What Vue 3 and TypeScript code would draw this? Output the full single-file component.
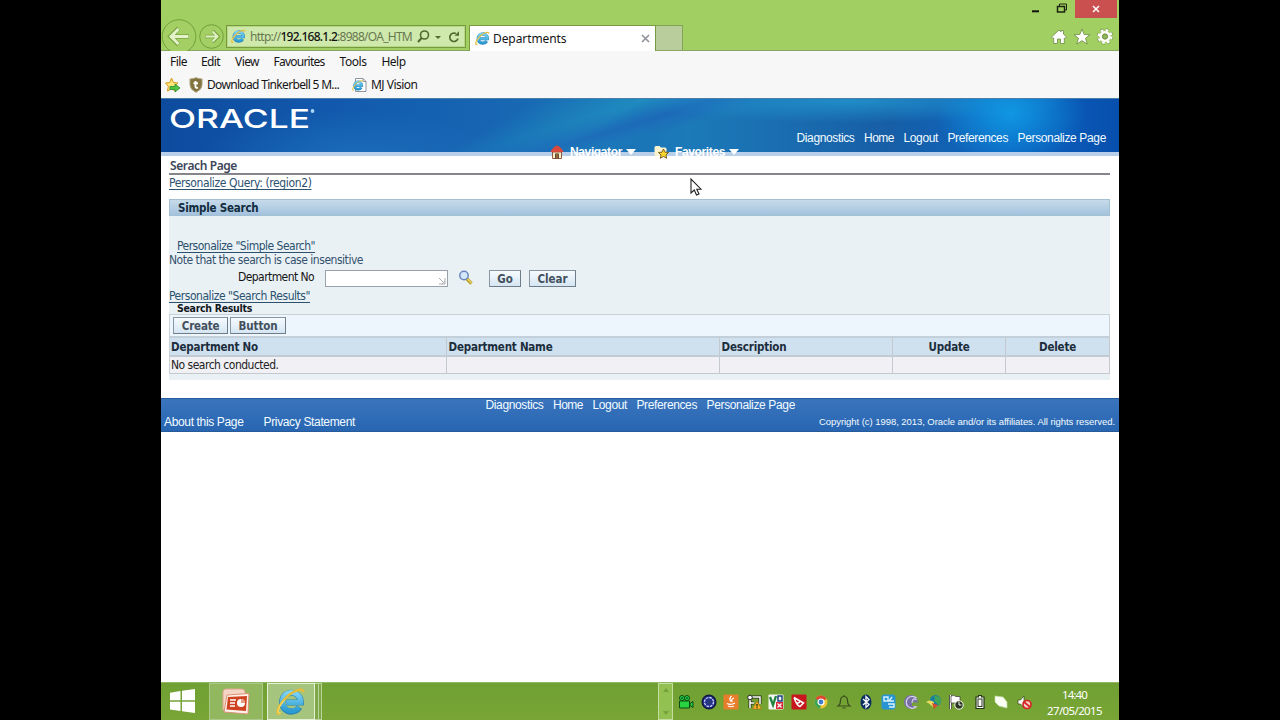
<script setup lang="ts">
interface Label {
  text: string
  width: number
}

// Spreads a label's letters so that it fills the given width in pixels.
const vFit = {
  mounted(el: HTMLElement, binding: { value: number }) {
    const natural = el.getBoundingClientRect().width
    const count = (el.textContent ?? '').trim().length
    el.style.letterSpacing = `${(binding.value - natural) / count}px`
  },
}

const menus: Label[] = [
  { text: 'File', width: 17 },
  { text: 'Edit', width: 19 },
  { text: 'View', width: 24 },
  { text: 'Favourites', width: 51 },
  { text: 'Tools', width: 27 },
  { text: 'Help', width: 24 },
]

const links: Label[] = [
  { text: 'Diagnostics', width: 58 },
  { text: 'Home', width: 30 },
  { text: 'Logout', width: 34.5 },
  { text: 'Preferences', width: 60.5 },
  { text: 'Personalize Page', width: 88.5 },
]

const columns: Label[] = [
  { text: 'Department No', width: 87 },
  { text: 'Department Name', width: 104 },
  { text: 'Description', width: 65 },
  { text: 'Update', width: 41 },
  { text: 'Delete', width: 37 },
]
</script>

<template>
  <div class="screen">
    <svg class="defs" width="0" height="0">
      <defs>
        <linearGradient id="ieBlue" x1="0" y1="0" x2="0" y2="1">
          <stop offset="0" stop-color="#7fd4f4" />
          <stop offset="1" stop-color="#2c9bd3" />
        </linearGradient>
        <symbol id="ie" viewBox="0 0 32 32">
          <path d="M25 21.500A10 10 0 1 1 26.500 16.500H11" fill="none" stroke="#2a83b5" stroke-width="6.500" />
          <path d="M24.500 21.500A9.800 9.800 0 1 1 26.300 16.500H11" fill="none" stroke="url(#ieBlue)" stroke-width="5.300" />
          <path d="M5 28C-1 31 1 22 9 13S29 0 29.500 5.500" fill="none" stroke="#e6bd36" stroke-width="2.600" />
          <path d="M5 27.500C0 29 2 22 9.500 13.500" fill="none" stroke="#fbe77a" stroke-width="1" />
        </symbol>
      </defs>
    </svg>

    <div class="window">
      <header class="chrome">
        <div class="caption">
          <svg class="min" width="10" height="14" viewBox="0 0 10 14"><path d="M1 11.300H8" stroke="#111" stroke-width="2" /></svg>
          <svg class="max" width="12" height="12" viewBox="0 0 12 12" fill="none" stroke="#1c2410">
            <path d="M3.500 3V1H10.500V7H9" />
            <rect x="1.500" y="3.500" width="7" height="5.500" stroke-width="1.500" />
          </svg>
          <div class="close">
            <svg width="8" height="8" viewBox="0 0 8 8"><path d="M1 1L7 7M7 1L1 7" stroke="#fff" stroke-width="1.500" /></svg>
          </div>
        </div>
        <div class="navrow">
          <svg class="arrows" width="65" height="35" viewBox="0 0 65 35">
            <circle cx="18" cy="19.500" r="16.800" fill="#a3cf65" stroke="#72a03a" />
            <circle cx="50.500" cy="19.500" r="11.800" fill="#a3cf65" stroke="#72a03a" />
            <g fill="none" stroke-linejoin="miter">
              <path d="M28 19.500H10M17.500 11.500L9.500 19.500L17.500 27.500" stroke="#78a53f" stroke-width="4.600" />
              <path d="M27.500 19.500H10M17.500 12L10 19.500L17.500 27" stroke="#e3f2c8" stroke-width="3" />
              <path d="M44 19.500H57M51.500 14L57 19.500L51.500 25" stroke="#78a53f" stroke-width="3.600" />
              <path d="M44.500 19.500H56.500M51.500 14.500L56.500 19.500L51.500 24.500" stroke="#dff0c3" stroke-width="2" />
            </g>
          </svg>
          <div class="address">
            <svg class="ie16"><use href="#ie" /></svg>
            <span v-fit="162" class="url">http://<b>192.168.1.2</b>:8988/OA_HTM</span>
            <svg class="tools" width="46" height="16" viewBox="0 0 46 16" fill="none" stroke="#4f6b2c">
              <circle cx="8.500" cy="6" r="4" stroke-width="1.600" />
              <path d="M5.600 9L2 13" stroke-width="2" />
              <path d="M19 7H25L22 10Z" fill="#4f6b2c" stroke="none" />
              <path d="M42 9.500A4.200 4.200 0 1 1 40 4.600" stroke-width="1.700" />
              <path d="M38.500 6.800H43V2.300Z" fill="#4f6b2c" stroke="none" />
            </svg>
          </div>
          <div class="tab">
            <svg class="ie16"><use href="#ie" /></svg>
            <span v-fit="64" class="tabname">Departments</span>
            <svg class="x" width="9" height="9" viewBox="0 0 9 9"><path d="M1 1L8 8M8 1L1 8" stroke="#92959c" stroke-width="1.700" /></svg>
          </div>
          <div class="newtab"></div>
          <svg class="commands" width="66" height="18" viewBox="0 0 66 18" fill="#fff" stroke="#6c8a43" stroke-width=".8">
            <path d="M1.500 9L9 2L11 4V2.500H13.500V6.200L16.500 9L15 10.500L14.300 10V15.500H10.500V11H7.500V15.500H3.700V10L3 10.500Z" />
            <path d="M32 1L34.200 6.600H40L35.500 10.300L37.200 16L32 12.700L26.800 16L28.500 10.300L24 6.600H29.800Z" />
            <circle cx="55" cy="8.500" r="6.400" fill="none" stroke="#6c8a43" stroke-width="3.600" stroke-dasharray="2.700 2.330" />
            <circle cx="55" cy="8.500" r="6.200" fill="none" stroke="#fff" stroke-width="2.800" stroke-dasharray="2.500 2.370" />
            <circle cx="55" cy="8.500" r="4.200" fill="none" stroke="#fff" stroke-width="2.600" />
            <circle cx="55" cy="8.500" r="2.600" fill="#8fb35b" />
          </svg>
        </div>
      </header>

      <nav class="menubar">
        <div v-for="m in menus" :key="m.text"><span v-fit="m.width">{{ m.text }}</span></div>
      </nav>
      <div class="favbar">
        <svg width="16" height="16" viewBox="0 0 16 16">
          <path d="M6.500 1L8.500 5.500L13 6L9.700 9.300L10.500 14L6.500 11.800L2.500 14L3.300 9.300L.5 6L4.800 5.500Z" fill="#ffe479" stroke="#d69a1c" />
          <path d="M5 9.500H10V7L15 11L10 15V12.500H5Z" fill="#54c445" stroke="#298c29" stroke-width=".8" />
        </svg>
        <svg class="shield" width="14" height="16" viewBox="0 0 14 16">
          <path d="M1 2Q4 2 7 .7Q10 2 13 2V8Q13 12.500 7 15.300Q1 12.500 1 8Z" fill="#81723f" stroke="#aaa077" />
          <path d="M6.500 4V9.500Q6.500 11.300 9 10.800M4.500 6.300H9" fill="none" stroke="#fff" stroke-width="1.900" />
        </svg>
        <span v-fit="132" class="fav1">Download Tinkerbell 5 M...</span>
        <svg class="page" width="16" height="16" viewBox="0 0 16 16">
          <path d="M3.500 1.500H11L14 4.500V14.500H3.500Z" fill="#fff" stroke="#8c949c" />
          <path d="M11 1.500V4.500H14" fill="none" stroke="#8c949c" />
          <use href="#ie" x="0" y="2.500" width="12" height="12" />
        </svg>
        <span v-fit="46.500">MJ Vision</span>
      </div>

      <div class="banner">
        <svg class="logo" width="150" height="34" viewBox="0 0 150 34">
          <text x="0" y="22" textLength="141" lengthAdjust="spacingAndGlyphs">ORACLE</text>
          <circle cx="143.500" cy="5" r="1.900" fill="#a9d6f4" />
        </svg>
        <div class="links top">
          <span v-for="l in links" :key="l.text" v-fit="l.width">{{ l.text }}</span>
        </div>
        <div class="quick">
          <svg width="14" height="14" viewBox="0 0 14 14">
            <path d="M2.500 7H11.500V13.500H2.500Z" fill="#f8ecc2" stroke="#77351f" stroke-width=".8" />
            <path d="M.5 7Q3 1.500 7 .5Q11 1.500 13.500 7Z" fill="#d9493b" />
            <path d="M5.200 8.500H8.800V13.500H5.200Z" fill="#3c2417" />
            <path d="M7 9V13.500" stroke="#e8a950" />
          </svg>
          <b v-fit="52" class="q1">Navigator</b>
          <i class="caret"></i>
          <svg class="q2" width="15" height="14" viewBox="0 0 15 14">
            <path d="M.5 2.500Q.5 1 2 1H5.500L7 2.500H11Q12.500 2.500 12.500 4V11H2Q.5 11 .5 9.500Z" fill="#fbf3cf" />
            <path d="M9.500 4L11 7.200L14.500 7.500L12 10L12.700 13.300L9.500 11.500L6.300 13.300L7 10L4.500 7.500L8 7.200Z" fill="#f8d52c" stroke="#5b4312" stroke-width=".8" />
          </svg>
          <b v-fit="50" class="q3">Favorites</b>
          <i class="caret"></i>
        </div>
      </div>

      <main class="content">
        <h1><span v-fit="67">Serach Page</span></h1>
        <div class="query"><a v-fit="142.500">Personalize Query: (region2)</a></div>
        <section>
          <h2><span v-fit="80.500">Simple Search</span></h2>
          <div class="simple"><a v-fit="138">Personalize "Simple Search"</a></div>
          <div class="note"><span v-fit="194">Note that the search is case insensitive</span></div>
          <div class="form">
            <label><span v-fit="76">Department No</span></label>
            <div class="input">
              <svg width="8" height="8" viewBox="0 0 8 8" fill="none" stroke="#a8acb0"><path d="M1 1L6 6M7 1V7H1M7 4L4 7" /></svg>
            </div>
            <svg class="lens" width="16" height="16" viewBox="0 0 16 16">
              <path d="M8.500 8.500L13.500 13.500" stroke="#b49a2a" stroke-width="3.200" />
              <path d="M9 8.500L13.500 13" stroke="#f1d95d" stroke-width="1.300" />
              <circle cx="6" cy="5.500" r="4.200" fill="#d4e8fb" stroke="#6c86bd" stroke-width="1.500" />
            </svg>
            <div class="btn go"><span v-fit="15.500">Go</span></div>
            <div class="btn clear"><span v-fit="30">Clear</span></div>
          </div>
          <div class="results-link"><a v-fit="141">Personalize "Search Results"</a></div>
          <h3><span v-fit="75">Search Results</span></h3>
          <div class="toolbar">
            <div class="btn create"><span v-fit="37.500">Create</span></div>
            <div class="btn button"><span v-fit="39">Button</span></div>
          </div>
          <div class="grid head">
            <div v-for="c in columns" :key="c.text"><span v-fit="c.width">{{ c.text }}</span></div>
          </div>
          <div class="grid body">
            <div><span v-fit="107.500">No search conducted.</span></div>
            <div></div><div></div><div></div><div></div>
          </div>
        </section>
      </main>

      <footer>
        <div class="links bottom">
          <span v-for="l in links" :key="l.text" v-fit="l.width">{{ l.text }}</span>
        </div>
        <div class="legal">
          <span v-fit="79.500">About this Page</span>
          <span v-fit="91.500" class="privacy">Privacy Statement</span>
          <small v-fit="296">Copyright (c) 1998, 2013, Oracle and/or its affiliates. All rights reserved.</small>
        </div>
      </footer>

      <div class="taskbar">
        <svg class="start" width="26" height="24" viewBox="0 0 26 24" fill="#fff">
          <path d="M0 3.700L10.500 2V11.300H0ZM12 1.800L25 0V11.300H12ZM0 12.700H10.500V22L0 20.500ZM12 12.700H25V24L12 22.200Z" />
        </svg>
        <div class="task ppt">
          <svg width="30" height="28" viewBox="0 0 30 28">
            <path d="M2 4Q2 1 5 1H21Q24 1 24 4V22H2Z" fill="#f5d5c5" stroke="#e0a58d" />
            <path d="M6 7L28 5.500L27 26L3 24Z" fill="#fff2eb" stroke="#dc9277" />
            <path d="M7 9L26 8L25 23L5.500 21.500Z" fill="#cf4320" />
            <path d="M9 12H15M9 15H14M9 18H14" stroke="#fff" stroke-width="1.700" />
            <circle cx="20" cy="15" r="4" fill="#fff" />
            <path d="M20 15V11A4 4 0 0 1 24 15Z" fill="#e69b7f" />
          </svg>
        </div>
        <div class="task browser"><svg width="30" height="30"><use href="#ie" /></svg></div>
        <div class="stack"></div>
        <div class="stack second"></div>
        <div class="scroller">
          <svg width="14" height="35" viewBox="0 0 14 35" fill="#77a13c"><path d="M4 8L7 4L10 8ZM4 27H10L7 31Z" /></svg>
        </div>
        <div class="tray">
          <svg viewBox="0 0 16 16"><g fill="#27d341" stroke="#084c13"><circle cx="4" cy="4" r="2.500" /><circle cx="9" cy="4" r="2.500" /><path d="M1.500 7H11.500V14H1.500ZM12 9.500L15 7.500V13.500L12 11.500Z" /></g><circle cx="4" cy="4" r="1" fill="#063" /><circle cx="9" cy="4" r="1" fill="#063" /></svg>
          <svg viewBox="0 0 16 16"><circle cx="8" cy="8" r="6.800" fill="#23308d" stroke="#111846" stroke-width="1.500" /><circle cx="8" cy="8" r="4.500" fill="none" stroke="#cbd6fa" stroke-width="1.300" stroke-dasharray="2.500 1" /><circle cx="8" cy="8" r="2.500" fill="#28397c" /></svg>
          <svg viewBox="0 0 16 16"><rect x=".5" y=".5" width="15" height="15" rx="1" fill="#e87d2c" /><path d="M8.500 2Q5.500 5 8 7.500M11 4Q7 5.500 9.500 8M4 9.500Q8 11.500 12 9M5 12Q8 13.500 11 12" fill="none" stroke="#fff" stroke-width="1.200" /></svg>
          <svg viewBox="0 0 16 16"><path d="M6 3H14V10M4 6V14M4 9H8" fill="none" stroke="#1e2b13" stroke-width="3" /><path d="M6 3H14V10M4 6V14M4 9H8" fill="none" stroke="#fff" stroke-width="1.500" /><circle cx="4" cy="3.500" r="2.300" fill="#fff" stroke="#222" /><path d="M11 7L15.500 15H6.500Z" fill="#fbb820" stroke="#9d6415" stroke-width=".6" /><path d="M11 10V12.500M11 13.300V14.300" stroke="#111" stroke-width="1.200" /></svg>
          <svg viewBox="0 0 16 16"><rect x=".5" y=".5" width="15" height="15" rx="1" fill="#f4f7f1" /><path d="M2 3L5 11L8 2" fill="none" stroke="#21833d" stroke-width="2.300" /><rect x="10" y="2" width="4" height="5" fill="none" stroke="#1d4185" stroke-width="1.500" /><rect x="8" y="8" width="7" height="7" fill="#d9263a" /><path d="M9.500 9.500L13.500 13.500M13.500 9.500L9.500 13.500" stroke="#fff" stroke-width="1.200" /></svg>
          <svg viewBox="0 0 16 16"><rect x=".5" y=".5" width="15" height="15" rx="1" fill="#c8161f" /><path d="M3 3.500L12.500 9L9 12.500Q6 12 3 3.500M6 9.500L9 8" fill="none" stroke="#fff" stroke-width="1.500" /></svg>
          <svg viewBox="0 0 16 16"><circle cx="8" cy="8" r="6.500" fill="#eac434" /><path d="M2.400 4.800A6.500 6.500 0 0 1 13.600 4.800L8 8Z" fill="#d94833" /><path d="M2.400 4.800A6.500 6.500 0 0 0 7 14.500L9 8Z" fill="#3da251" /><circle cx="8" cy="8" r="3" fill="#427cc7" stroke="#fff" stroke-width="1.200" /></svg>
          <svg viewBox="0 0 16 16" fill="none" stroke="#3b501d"><path d="M2 12Q4.500 10.500 4.500 6.500Q4.500 2.500 8 2.500Q11.500 2.500 11.500 6.500Q11.500 10.500 14 12ZM8 2.500V1M6.500 14H9.500" stroke-width="1.200" /></svg>
          <svg viewBox="0 0 16 16"><ellipse cx="8" cy="8" rx="5.500" ry="7.500" fill="#092f62" /><path d="M5 5L11 10.500L8 13.500V2.500L11 5.500L5 11" fill="none" stroke="#fff" stroke-width="1.300" /></svg>
          <svg viewBox="0 0 16 16"><rect x=".5" y=".5" width="14" height="15" rx="3" fill="#2895d2" /><path d="M3 3H7V7H3ZM7 10H13V13H8M11 3L8 7H13" fill="none" stroke="#d8f3ff" stroke-width="1.400" /></svg>
          <svg viewBox="0 0 16 16"><circle cx="8" cy="8" r="7" fill="#766fa4" /><path d="M13.500 4A6 6 0 1 0 13 13A5 5 0 0 1 10 5.500Q12 4 13.500 6" fill="none" stroke="#d5cfe8" stroke-width="1.300" /><path d="M15 8.500H9V12H14.500" fill="#78a137" /></svg>
          <svg viewBox="0 0 16 16"><circle cx="9.500" cy="6.500" r="5.500" fill="#197ca2" /><path d="M7 1.500Q10 3 8 7L13 11Q16 7 14 3Z" fill="#40a557" /><path d="M0 8Q4 5 8 8L7 13L3 9.500Z" fill="#e9dc61" /><path d="M6 9L12 11L8 15Z" fill="#d44d28" /></svg>
          <svg viewBox="0 0 16 16"><path d="M2.500 1V15" stroke="#222" stroke-width="3" /><path d="M2.500 1V15" stroke="#fff" stroke-width="1.500" /><path d="M3 2Q6 .5 8 2.500H12V9H3Z" fill="#fff" stroke="#333" stroke-width=".7" /><circle cx="11" cy="11" r="4.200" fill="#28351c" stroke="#fff" /><path d="M11 8V11H13.500" fill="none" stroke="#fff" /></svg>
          <svg viewBox="0 0 16 16" class="battery"><path d="M6.500 1.500H9.500V3H12V14.500H4V3H6.500Z" fill="#fff" stroke="#26351a" stroke-width="1.200" /><rect x="6" y="5" width="4" height="7.500" fill="#fff" stroke="#26351a" /></svg>
          <svg viewBox="0 0 16 16"><path d="M2 2L10 3L14 8V14L6 12L2 8Z" fill="#fbfff4" stroke="#c3dba8" stroke-width=".7" /></svg>
          <svg viewBox="0 0 16 16"><path d="M2 6H4.500L8 2V14L4.500 10H2Z" fill="#fff" stroke="#38471f" stroke-width=".7" /><circle cx="11" cy="10.500" r="4" fill="#f3d4cc" stroke="#d72424" stroke-width="1.700" /><path d="M8 8L14 13" stroke="#d72424" stroke-width="1.700" /></svg>
        </div>
        <div class="clock">
          <span v-fit="25">14:40</span>
          <span v-fit="55">27/05/2015</span>
        </div>
      </div>

      <svg class="cursor" width="12" height="19" viewBox="0 0 12 19">
        <path d="M1 1V15L4.300 12L6.500 17L9 16L6.800 11.200H11Z" fill="#fff" stroke="#222" stroke-width="1.100" />
      </svg>
    </div>
  </div>
</template>

<style>
body {
  margin: 0;
  background: #000;
}
</style>

<style scoped>
.screen {
  width: 1280px;
  height: 720px;
  display: flex;
  justify-content: center;
  background: #000;
  overflow: hidden;
}
.screen * {
  box-sizing: border-box;
}
.defs {
  position: absolute;
}
svg {
  display: block;
  flex: none;
}
span,
a,
b,
small {
  white-space: nowrap;
}
.window {
  position: relative;
  width: 958px;
  height: 720px;
  display: flex;
  flex-direction: column;
  flex: none;
  background: #fff;
  font: 12px 'Noto Sans', 'Open Sans', sans-serif;
  color: #151515;
}
.chrome {
  height: 51px;
  background: #a1cf61;
  border-bottom: 1px solid #8aa665;
}
.caption {
  height: 18px;
  display: flex;
  justify-content: flex-end;
}
.min {
  margin-right: 15px;
}
.max {
  margin: 3px 7px 0 0;
}
.close {
  width: 42px;
  height: 18px;
  margin-right: 2px;
  display: flex;
  align-items: center;
  justify-content: center;
  background: #c9504e;
}
.navrow {
  height: 32px;
  display: flex;
  align-items: flex-start;
}
.arrows {
  margin-top: -1px;
}
.address {
  width: 240px;
  height: 23px;
  margin-top: 7px;
  padding-left: 4px;
  display: flex;
  align-items: center;
  border: 1px solid #77993f;
  outline: 1px solid #b5da83;
  outline-offset: -2px;
  background: #cfe8ac;
}
.ie16 {
  width: 15px;
  height: 15px;
}
.url {
  margin-left: 4px;
  color: #68784f;
}
.url b {
  font-weight: 500;
  color: #111;
}
.tools {
  margin-left: 4px;
}
.tab {
  width: 187px;
  height: 26px;
  margin: 7px 0 0 3px;
  padding-left: 5px;
  display: flex;
  align-items: center;
  border: 1px solid #77993f;
  border-bottom: 0;
  background: #fff;
}
.tabname {
  margin-left: 3px;
  width: 65px;
}
.x {
  margin-left: 83px;
}
.newtab {
  width: 27px;
  height: 25px;
  margin-top: 7px;
  border: 1px solid #83a355;
  border-left: 0;
  border-bottom: 0;
  background: #b8cc9c;
}
.commands {
  margin: 10px 0 0 367px;
}
.menubar {
  height: 22px;
  padding: 0 0 1px 9px;
  display: grid;
  grid-template-columns: 31px 34px 38.500px 66px 42px 40px;
  align-items: center;
  background: #f7f7f7;
}
.favbar {
  height: 25px;
  padding: 0 0 2px 4px;
  display: flex;
  align-items: center;
  background: #f7f7f7;
}
.shield {
  margin-left: 8px;
}
.fav1 {
  margin-left: 4px;
}
.page {
  margin: 0 3px 0 13px;
}
.banner {
  position: relative;
  height: 58px;
  padding: 7px 13px 0 8px;
  display: flex;
  border-top: 1px solid #4b7ea6;
  border-bottom: 4px solid #b9cfe9;
  background:
    radial-gradient(ellipse 75px 50px at 850px 15px, #109ee8dd, transparent),
    radial-gradient(ellipse 220px 22px at 690px 2px, #2297cfcc, transparent),
    radial-gradient(ellipse 150px 50px at 190px 60px, #1e76bfaa, transparent),
    linear-gradient(163deg, transparent 43%, #1b57b588 49%, transparent 54%),
    linear-gradient(151deg, transparent 36%, #2093c1bb 46%, transparent 53%),
    linear-gradient(90deg, #0d4b9e, #1259ad 18%, #1766b3 35%, #1c7ab9 55%, #175ea6 76%, #0c65c1 88%, #084fad);
}
.logo text {
  font: 500 26px Inter, 'Liberation Sans', sans-serif;
  fill: #fff;
}
.links {
  display: flex;
  gap: 10px;
  font: 12px/14px 'Liberation Sans', Arial, sans-serif;
  color: #f2fbff;
}
.links.top {
  gap: 9.500px;
  margin: 25px 0 0 auto;
}
.quick {
  position: absolute;
  left: 389px;
  top: 45px;
  height: 16px;
  display: flex;
  align-items: center;
  font: 12px/16px 'Liberation Sans', Arial, sans-serif;
  color: #fff;
}
.q1 {
  margin: 0 4px 0 6px;
}
.q2 {
  margin: 0 6px 0 18px;
}
.q3 {
  margin-right: 4px;
}
.caret {
  border: 5px solid transparent;
  border-top: 6px solid #fff;
  border-bottom: 0;
}
.content {
  width: 941px;
  margin-left: 8px;
  height: 242px;
  font: 12px 'DejaVu Sans Condensed', 'Noto Sans', sans-serif;
}
h1,
h2,
h3 {
  margin: 0;
  display: flex;
  align-items: center;
}
h1 {
  height: 19px;
  padding: 2px 0 0 1px;
  font: 600 12px 'Noto Sans', sans-serif;
  color: #3c4659;
  border-bottom: 2px solid #84868b;
}
a {
  color: #2b516f;
  text-decoration: underline;
  text-underline-offset: 2px;
}
.query,
.simple,
.note,
.results-link {
  display: flex;
  align-items: center;
}
.query {
  height: 16px;
  margin-bottom: 8px;
}
section {
  height: 181px;
  background: #eaf1f5;
}
h2 {
  height: 17px;
  padding-left: 8px;
  font: bold 11.500px 'DejaVu Sans Condensed', sans-serif;
  color: #122c40;
  border: 1px solid #a2bfd4;
  background: linear-gradient(#c7dbea, #a3c2de);
}
.simple {
  height: 14px;
  margin: 23px 0 0 8px;
}
.note {
  height: 13px;
  color: #34516e;
}
.form {
  height: 23px;
  display: flex;
  align-items: center;
}
label {
  width: 145px;
  height: 16px;
  display: flex;
  justify-content: flex-end;
}
.input {
  width: 123px;
  height: 17px;
  margin: 2px 0 0 11px;
  padding: 0 1px 1px 0;
  display: flex;
  justify-content: flex-end;
  align-items: flex-end;
  border: 1px solid #98a1a9;
  background: #fff;
}
.lens {
  margin: 0 0 0 10px;
}
.btn {
  height: 17px;
  display: flex;
  align-items: center;
  justify-content: center;
  border: 1px solid #8895a3;
  border-right-color: #6f7c8a;
  border-bottom-color: #6f7c8a;
  background: linear-gradient(#f6fbff, #d5e6f2);
  font: bold 11.500px 'DejaVu Sans Condensed', sans-serif;
  color: #44505c;
}
.go {
  width: 32px;
  margin: 2px 8px 0 15px;
}
.clear {
  width: 47px;
  margin-top: 2px;
}
.results-link {
  height: 13px;
}
h3 {
  height: 12px;
  padding-left: 8px;
  font: bold 10.500px 'DejaVu Sans Condensed', sans-serif;
  color: #12181d;
}
.toolbar {
  height: 22px;
  padding: 2px 0 0 3px;
  display: flex;
  gap: 2px;
  border: 1px solid #c9d2d9;
  border-bottom: 0;
  background: #edf6fd;
}
.create {
  width: 55px;
}
.button {
  width: 56px;
}
.grid {
  display: grid;
  grid-template-columns: 277.500px 273px 173.500px 113px 104px;
}
.grid > div {
  display: flex;
  align-items: center;
  padding-left: 2px;
  border-right: 1px solid #c3c9cf;
}
.head {
  height: 21px;
  font-size: 11.500px;
  font-weight: bold;
  color: #1c2d3c;
  background: #cfe0ef;
  border-top: 2px solid #c3d0d9;
  border-bottom: 2px solid #c1cbd4;
}
.head > div:nth-child(n + 4) {
  justify-content: center;
  padding-left: 0;
}
.body {
  height: 17px;
  background: #f1f1f5;
  border-bottom: 1px solid #c3c9cf;
  color: #222;
}
.grid > div:first-child {
  border-left: 1px solid #c9d2d9;
  padding-left: 1px;
}
footer {
  height: 34px;
  background: linear-gradient(#3a74bd, #2866b2);
  border-top: 1px solid #235c9f;
  border-bottom: 1px solid #265a9a;
}
.links.bottom {
  height: 14px;
  gap: 9.500px;
  padding-left: 324.500px;
  line-height: 13px;
}
.legal {
  height: 17px;
  padding: 0 4px 0 3px;
  display: flex;
  align-items: center;
  font: 12px 'Liberation Sans', Arial, sans-serif;
  color: #f2fbff;
}
.privacy {
  margin: 0 auto 0 20px;
}
small {
  font-size: 9.500px;
}
.taskbar {
  height: 38px;
  margin-top: auto;
  display: flex;
  align-items: stretch;
  border-top: 1px solid #91b863;
  background: linear-gradient(#70a033, #78a535);
}
.start {
  margin: 6px 0 0 9px;
}
.task {
  display: flex;
  align-items: center;
  justify-content: center;
  border: 1px solid #adc98a;
}
.ppt {
  width: 54px;
  margin: 0 4px 0 13px;
  background: #91b75f;
}
.browser {
  width: 48px;
  border-color: #e5f0d5;
  background: #a5c47e;
}
.stack {
  width: 4px;
  border: 1px solid #bad49b;
  border-left: 0;
  background: #7ea747;
}
.stack.second {
  width: 3px;
}
.scroller {
  width: 15px;
  margin-left: 336px;
  border: 1px solid #c4de9f;
  background: #92c151;
}
.tray {
  margin-left: 5px;
  display: flex;
  align-items: center;
  gap: 6.500px;
}
.tray svg {
  width: 16px;
  height: 16px;
}
.tray .battery {
  margin: 0 -1px 0 1px;
}
.clock {
  width: 56px;
  margin-left: 15px;
  padding-top: 4px;
  display: flex;
  flex-direction: column;
  align-items: center;
  font-size: 11.500px;
  line-height: 16px;
  color: #fff;
}
.cursor {
  position: absolute;
  left: 529px;
  top: 178px;
}
</style>
